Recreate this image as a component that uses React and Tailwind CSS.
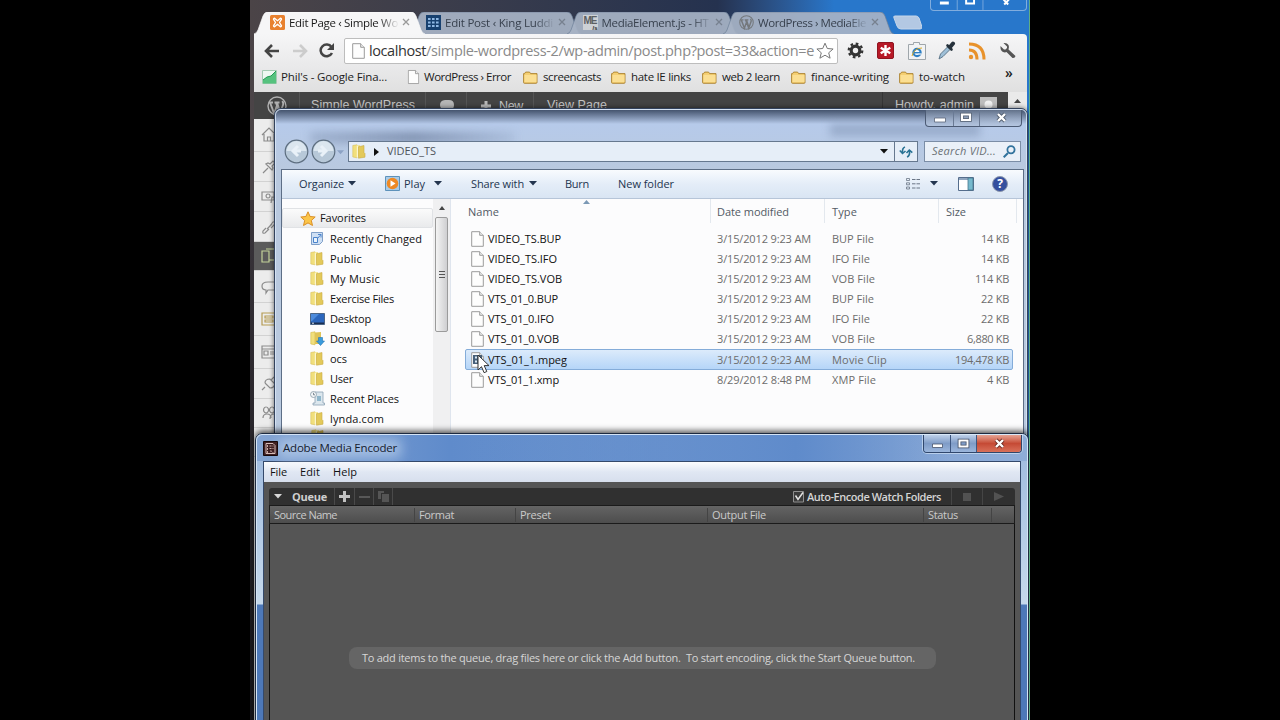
import { useLayoutEffect, useRef } from "react";

// Text set to a fixed width, the spacing between letters takes up the difference
function Txt({ w, className = "", children }) {
  const ref = useRef(null);

  useLayoutEffect(() => {
    const el = ref.current;
    el.style.letterSpacing = "0px";
    const natural = el.getBoundingClientRect().width;
    el.style.letterSpacing = `${(w - natural) / el.textContent.length}px`;
  }, [w, children]);

  return (
    <span ref={ref} className={`inline-block shrink-0 whitespace-pre ${className}`}>
      {children}
    </span>
  );
}

const Caret = ({ className = "" }) => (
  <svg className={`shrink-0 ${className}`} width="8" height="5" viewBox="0 0 8 5">
    <path d="M0 0h8L4 4.6z" fill="currentColor" />
  </svg>
);

const PageIcon = ({ className = "" }) => (
  <svg className={`shrink-0 ${className}`} width="13" height="16" viewBox="0 0 13 16">
    <path d="M.7.7h8l3.600 3.600v11H.7z" fill="#fdfdfd" stroke="#9b9b9b" />
    <path d="M8.700.7v3.600h3.600" fill="#eee" stroke="#9b9b9b" />
  </svg>
);

const BookmarkFolder = () => (
  <svg width="15" height="13" viewBox="0 0 15 13">
    <path d="M.6 11.500V2.600h1l1-1.500h4l1 1.500h6.400v8.900q0 .8-.8.8H1.400q-.8 0-.8-.8z" fill="#f5cf72" stroke="#a97f2c" strokeWidth=".9" />
    <path d="M1.500 4h12v7h-12z" fill="#fbdf93" />
  </svg>
);

const Folder = () => (
  <svg width="14" height="15" viewBox="0 0 14 15">
    <path d="M.8 1.500 5 .8v13L.8 13z" fill="#f1df7c" stroke="#d9c05a" strokeWidth=".6" />
    <path d="M4 1.500 8 1v11l-4 1.500z" fill="#f3e48c" />
    <path d="M6.500 2.800 12 1.500v7l1 1v3.700l-6.500 1z" fill="#e3c95a" stroke="#c9ad48" strokeWidth=".6" />
    <path d="M5.500 2v11" stroke="#fbf6cf" />
  </svg>
);

const RecentlyChanged = () => (
  <svg width="14" height="15" viewBox="0 0 14 15">
    <path d="M1.500 1.500h11v9l-3 3h-8z" fill="#cfe0f4" stroke="#7f9fc8" />
    <path d="M3.500 6.500h4v5h-4zM7 8l4-4.500M8 3.500h3v3" fill="#eaf3fc" stroke="#4a83cb" />
  </svg>
);

const DesktopIcon = () => (
  <svg width="15" height="12" viewBox="0 0 15 12">
    <path d="M.5.5h14v11H.5z" fill="#2b66bd" stroke="#4d6686" />
    <path d="M1 1h8L2 8H1z" fill="#4d8bdc" />
    <path d="M1 9.500h13V11H1z" fill="#1a2e50" />
    <path d="M2 10.200h2" stroke="#dbe7f5" />
  </svg>
);

const DownloadsIcon = () => (
  <svg width="15" height="15" viewBox="0 0 15 15">
    <path d="M.8 1.500 5 .8v13L.8 13z" fill="#f1df7c" stroke="#d3b848" strokeWidth=".6" />
    <path d="M5 1.500 11 1v12H5z" fill="#dfc458" />
    <path d="M8.500 6.500h4v3.500h2l-4 4.500-4-4.500h2z" fill="#3b9bdc" stroke="#2273b3" strokeWidth=".6" />
  </svg>
);

const RecentPlaces = () => (
  <svg width="15" height="15" viewBox="0 0 15 15">
    <path d="M5 1h8v11h1.500v2H3v-2h2z" fill="#dce7ee" stroke="#8ba1b2" strokeWidth=".8" />
    <path d="M7 5h4v5H7z" fill="#8fb6cb" />
    <circle cx="3.500" cy="3.500" r="3" fill="#f2f5f7" stroke="#899aa7" strokeWidth=".8" />
    <path d="M3.500 1.800v2h1.500" fill="none" stroke="#65717c" strokeWidth=".8" />
  </svg>
);

const WpLogo = ({ size, color }) => (
  <svg className="shrink-0" width={size} height={size} viewBox="0 0 20 20" fill="none" stroke={color}>
    <circle cx="10" cy="10" r="9" strokeWidth="1.400" />
    <path d="M3 6.500 7.200 17.500 10 9.500 8.800 6.500M10 9.500l3 8L16 9q.8-2-.8-3.800M2 6.500h4M7.500 6.500h5M10 6.500l3.200 10" strokeWidth="1.900" />
  </svg>
);

const TAB_ICONS = {
  xampp: (
    <svg width="15" height="15" viewBox="0 0 15 15">
      <rect width="15" height="15" rx="1.500" fill="#e8812f" />
      <path d="M3.500 4.200q0-1 1-1l3 2.500 3-2.500q1 0 1 1L9.500 7.500l2 3.300q0 1-1 1l-3-2.500-3 2.500q-1 0-1-1l2-3.300z" fill="none" stroke="#fff" strokeWidth="1.300" />
    </svg>
  ),
  grid: (
    <svg width="15" height="15" viewBox="0 0 15 15">
      <rect width="15" height="15" fill="#17406f" />
      <path d="M2 4h11M2 7.500h11M2 11h11" stroke="#8fb8e4" strokeWidth="2.200" strokeDasharray="2.600 1.400" />
    </svg>
  ),
  media: (
    <span className="flex h-[15px] w-[15px] flex-col items-end bg-[#cdd1d5] font-['Liberation_Sans',sans-serif] font-bold">
      <span className="h-[10px] w-[15px] text-center text-[10px] leading-[11px] tracking-[-1px] text-[#5c6064]">ME</span>
      <span className="h-[6px] text-[6px] leading-[6px] text-[#1f1f1f]">/s</span>
    </span>
  ),
  wp: <WpLogo size={15} color="#74787c" />,
};

const tabs = [
  { icon: "xampp", title: "Edit Page ‹ Simple Wo", w: 109, active: true },
  { icon: "grid", title: "Edit Post ‹ King Luddi", w: 108 },
  { icon: "media", title: "MediaElement.js - HT", w: 107 },
  { icon: "wp", title: "WordPress › MediaEle", w: 108 },
];

function Tab({ icon, title, w, active }) {
  return (
    <div className={active ? "relative z-10 -mr-[15px] h-[22px] w-[171px] shrink-0" : "relative -mr-[14.500px] h-[22px] w-[171px] shrink-0"}>
      <svg className="absolute inset-0" width="171" height="22" viewBox="0 0 171 22">
        <path
          d="M0 22Q3 21 4 18L9 4Q10.500 0 14 0H157Q160.500 0 162 4L167 18Q168 21 171 22"
          fill={active ? "#f6f6f7" : "#a7b3c5"}
          fillOpacity={active ? 1 : 0.93}
          stroke={active ? "#fafafa" : "#6d7f98"}
          strokeWidth=".7"
        />
      </svg>
      <div className="relative -mt-[1px] flex h-full items-center pl-[16px]">
        <span className="mr-[4px] flex w-[15px]">{TAB_ICONS[icon]}</span>
        <span className="-mt-[2px] w-[110px] overflow-hidden [mask-image:linear-gradient(to_right,black_82%,transparent)]">
          <Txt w={w} className={active ? "text-[11.5px] leading-[21px] text-[#1a1a1a]" : "text-[11.5px] leading-[21px] text-[#38414e]"}>{title}</Txt>
        </span>
        <svg className="ml-[3px]" width="8" height="8" viewBox="0 0 8 8">
          <path d="m1 1 6 6M7 1 1 7" stroke={active ? "#9a9a9a" : "#77818f"} strokeWidth="1.300" />
        </svg>
      </div>
    </div>
  );
}

const bookmarks = [
  { label: "screencasts", w: 58, cell: "w-[88px]" },
  { label: "hate IE links", w: 60, cell: "w-[91px]" },
  { label: "web 2 learn", w: 58, cell: "w-[89px]" },
  { label: "finance-writing", w: 78, cell: "w-[108px]" },
  { label: "to-watch", w: 46, cell: "w-[106px]" },
];

// Admin menu glyphs cut off by the window in front
const adminMenu = [
  { cls: "h-[33px] bg-[#ececec]", d: "M1 8 8 1l7 7M3 7v7h10V7M6.500 14v-4h3v4" },
  { cls: "h-[30px] bg-[#ececec]", d: "m2 14 5-5M5 5l6 6 1-2-1-2 3-3-2-2-3 3-2-1z" },
  { cls: "h-[30px] bg-[#ececec]", d: "M1 3h12v8H1zM7 5a2 2 0 1 0 .1 0M10 14l1-6 4 1" },
  { cls: "h-[30px] bg-[#ececec]", d: "m5 9-3 3q-1 3 2 2l4-4M8 8l4-5q3-1 2 2l-4 4M6 10l5-5" },
  { cls: "h-[29px] bg-[#5b5b5b] text-[#c4d39a]", d: "M1 3h7v11H1zM5 1h9v11H8" },
  { cls: "h-[32px] bg-[#ececec]", d: "M7 3h8v8H7l-2 3V11Q1 11 1 7t6-4" },
  { cls: "h-[33px] bg-[#ececec] text-[#b59b53]", d: "M1 2h13v12H1zM4 5h8v2H4zM4 9h8v2H4z" },
  { cls: "h-[33px] bg-[#ececec]", d: "M1 2h14v12H1zM1 5h14M3 7h4v4H3zM9 8h5M9 10h5" },
  { cls: "h-[30px] bg-[#ececec]", d: "m1 14 3-3M4 7l5 5q4 0 5-4L9 3Q4 3 4 7M10 4l3-3M13 7l3-3" },
  { cls: "h-[29px] bg-[#ececec]", d: "M5 2a2.500 3 0 1 0 .1 0M11 2a2.500 3 0 1 0 .1 0M2 13q0-4 4-4t4 4M9 14q0-5 4-5" },
  { cls: "h-[29px] bg-[#ececec]", d: "M1 3h12v9H1z" },
];

function Browser() {
  return (
    <div className="absolute top-0 left-[4px] flex h-[720px] w-[773px] flex-col">
      {/* Window buttons */}
      <div className="absolute top-0 right-0 flex h-[11px] w-[97px] rounded-b border border-t-0 border-[#bcd3ec]/60 text-white">
        <svg width="96" height="10" viewBox="0 0 96 10" fill="none">
          <path d="M26.500 0v10M52.500 0v10" stroke="#a9c8e9" strokeOpacity=".6" />
          <path d="M9 3h9" stroke="#fff" strokeWidth="3" />
          <path d="M35.500-2h8v5.500h-8z" stroke="#fff" strokeWidth="2" />
          <path d="m72-2 6 6.500M80-2l-6 6.500" stroke="#fff" strokeWidth="2" />
        </svg>
      </div>

      <div className="flex h-[34px] items-end">
        {tabs.map((t) => (
          <Tab key={t.title} {...t} />
        ))}
        <svg className="mb-[3px] ml-[12px]" width="30" height="16" viewBox="0 0 30 16">
          <path d="M3 1h21q2 0 3 2l3 9q0 2-2 2H9q-3 0-4-3L2 3q-1-2 1-2z" fill="#b3c8e3" stroke="#c5d6ea" />
        </svg>
      </div>

      {/* Address bar */}
      <div className="flex h-[33px] items-center rounded-tr bg-linear-to-b from-[#f6f6f7] to-[#e9e9ea] pl-[10px]">
        <svg width="16" height="14" viewBox="0 0 16 14" fill="none" stroke="#444" strokeWidth="2.600">
          <path d="M8 1 2 7l6 6M2 7h13" />
        </svg>
        <svg className="ml-[12px]" width="16" height="14" viewBox="0 0 16 14" fill="none" stroke="#ccc" strokeWidth="2.600">
          <path d="m8 1 6 6-6 6M14 7H1" />
        </svg>
        <svg className="ml-[11px]" width="16" height="15" viewBox="0 0 16 15" fill="none">
          <path d="M12.500 4A6 5.800 0 1 0 13 10" stroke="#444" strokeWidth="2.500" />
          <path d="M15 0v7H8z" fill="#444" />
        </svg>
        <div className="ml-[9px] flex h-[26px] w-[494px] items-center rounded-[2px] border border-[#bdbdbd] bg-white pl-[7px]">
          <PageIcon />
          <div className="ml-[4px] flex w-[446px] overflow-hidden text-[14.5px] leading-[22px]">
            <Txt w={57} className="text-[#333]">localhost</Txt>
            <Txt w={388} className="text-[#8a8a8a]">/simple-wordpress-2/wp-admin/post.php?post=33&action=e</Txt>
          </div>
          <svg className="ml-[1px]" width="18" height="17" viewBox="0 0 18 17">
            <path d="m9 1.200 2.300 5.300 5.800.5-4.400 3.800 1.400 5.400L9 13.200l-5.100 3 1.400-5.400L.9 7l5.800-.5z" fill="#fff" stroke="#777" />
          </svg>
        </div>
        <svg className="ml-[9px]" width="17" height="17" viewBox="0 0 17 17" fill="none" stroke="#333">
          <circle cx="8.500" cy="8.500" r="4.300" strokeWidth="3.200" />
          <circle cx="8.500" cy="8.500" r="6.800" strokeWidth="2.200" strokeDasharray="2.670 2.670" />
        </svg>
        <svg className="ml-[13px]" width="17" height="17" viewBox="0 0 17 17">
          <rect x=".5" y=".5" width="16" height="16" rx="1.500" fill="#b71927" stroke="#8f1520" />
          <path d="M8.500 3v11M3.700 5.700l9.600 5.600M3.700 11.300l9.600-5.600" stroke="#fff" strokeWidth="2.400" />
        </svg>
        <svg className="ml-[14px]" width="18" height="18" viewBox="0 0 18 18">
          <path d="M.5 2.500h5v-2h6v2h6v15H.5z" fill="#f2f3f4" stroke="#9fa6ab" />
          <circle cx="9" cy="10.500" r="3.600" fill="#fff" stroke="#2f7fc4" strokeWidth="2.200" />
          <path d="M5.500 10.700h7" stroke="#2f7fc4" strokeWidth="1.500" />
          <path d="M10.500 12h3" stroke="#f2f3f4" strokeWidth="1.200" />
          <path d="M4 14Q6 6 14 6" fill="none" stroke="#d6a928" />
        </svg>
        <svg className="ml-[12px]" width="18" height="19" viewBox="0 0 18 19">
          <path d="m1 18 1.500-5L9.500 6l2.500 2.500L5 15.500z" fill="#9fc0d8" stroke="#60798c" />
          <path d="m9.500 4.500 4 4" stroke="#26323c" strokeWidth="2.600" strokeLinecap="round" />
          <path d="m12.500 5.500 2.500-3" stroke="#26323c" strokeWidth="4" strokeLinecap="round" />
        </svg>
        <svg className="ml-[12px]" width="18" height="18" viewBox="0 0 18 18" fill="none" stroke="#e8922b" strokeWidth="3">
          <circle cx="3" cy="15" r="2.200" fill="#e8922b" stroke="none" />
          <path d="M1 8q8 0 8 9.500M1 2q15 0 15 15.500" />
        </svg>
        <svg className="ml-[14px]" width="16" height="17" viewBox="0 0 16 17">
          <path d="M3.500 1 7 4.500V6L5.500 7.500H4L.5 4Q0 8.500 3 10q2 .8 3.500 0l6 6q2.500.5 3-2l-7-6.500Q9.500 5 8.500 3 7 .5 3.500 1z" fill="#555" />
        </svg>
      </div>

      {/* Bookmarks */}
      <div className="flex h-[25px] items-start bg-linear-to-b from-[#e9e9ea] to-[#e0e0e0] pl-[8px] text-[11.5px] leading-[20px] text-[#1c1c1c]">
        <div className="flex h-[20px] items-center">
          <svg width="15" height="14" viewBox="0 0 15 14">
            <path d="M.5.5h14v13H.5z" fill="#eef8f1" stroke="#a5cbb3" />
            <path d="m1 10 4-3 4-1 5-5v12.500H1z" fill="#56c27e" />
            <path d="m1 10 4-3 4-1 5-5" fill="none" stroke="#209a52" />
          </svg>
          <span className="ml-[4px] w-[126px]"><Txt w={106}>Phil's - Google Fina...</Txt></span>
          <PageIcon className="mr-[4px] scale-90" />
          <span className="w-[99px]"><Txt w={87}>WordPress › Error</Txt></span>
          {bookmarks.map((b) => (
            <span key={b.label} className={`flex shrink-0 items-center gap-[5px] ${b.cell}`}>
              <BookmarkFolder />
              <Txt w={b.w}>{b.label}</Txt>
            </span>
          ))}
          <span className="mb-[9px] text-[14px] font-semibold">»</span>
        </div>
      </div>

      {/* Admin bar */}
      <div className="flex h-[27px] shrink-0 bg-[#444] font-['Liberation_Sans',sans-serif] text-[12.5px] leading-[26px] text-[#c4c4c4]">
        <span className="flex w-[46px] items-center border-r border-[#555] pl-[13px]"><WpLogo size={20} color="#b1b1b1" /></span>
        <span className="w-[126px] border-r border-[#555] pl-[11px]"><Txt w={104}>Simple WordPress</Txt></span>
        <span className="flex w-[41px] justify-center border-r border-[#555] pt-[8px] pl-[2px]">
          <svg width="14" height="12" viewBox="0 0 14 12"><path d="M5 0h4q5 0 5 5t-5 4.500L7 12 5.500 9.500Q0 9.500 0 5t5-5z" fill="#b5b5b5" /></svg>
        </span>
        <span className="flex w-[67px] items-center border-r border-[#555] pl-[14px]">
          <svg className="mr-[8px]" width="10" height="10" viewBox="0 0 10 10"><path d="M5 0v10M0 5h10" stroke="#b9b9b9" strokeWidth="3" /></svg>
          <Txt w={24}>New</Txt>
        </span>
        <span className="w-[348px] pl-[13px]"><Txt w={60}>View Page</Txt></span>
        <span className="flex w-[126px] border-l border-[#353535] pl-[12px]">
          <Txt w={79}>Howdy, admin</Txt>
          <svg className="mt-[5px] ml-[6px]" width="17" height="17" viewBox="0 0 17 17">
            <path d="M0 0h17v17H0z" fill="#bdbdbd" />
            <circle cx="8.500" cy="7.500" r="4" fill="#f0f0f0" />
            <path d="M2 17q0-5 6.500-5t6.500 5z" fill="#f0f0f0" />
          </svg>
        </span>
        <span className="flex flex-1 justify-center bg-[#eaeaea] pt-[7px] text-[#444]">
          <svg width="7" height="4" viewBox="0 0 7 4"><path d="M0 4h7L3.500 0z" fill="#444" /></svg>
        </span>
      </div>

      {/* Admin menu */}
      <div className="flex flex-1 flex-col bg-[#ececec]">
        {adminMenu.map((m, i) => (
          <div key={i} className={`flex shrink-0 items-center border-b border-[#d2d2d2] pl-[7px] text-[#8b8b8b] ${m.cls}`}>
            <svg width="16" height="16" viewBox="0 0 16 16" fill="none" stroke="currentColor" strokeWidth="1.200">
              <path d={m.d} />
            </svg>
          </div>
        ))}
      </div>
    </div>
  );
}

const favorites = [
  { label: "Recently Changed", w: 92, icon: <RecentlyChanged /> },
  { label: "Public", w: 32, icon: <Folder /> },
  { label: "My Music", w: 50, icon: <Folder /> },
  { label: "Exercise Files", w: 64, icon: <Folder /> },
  { label: "Desktop", w: 41, icon: <DesktopIcon /> },
  { label: "Downloads", w: 56, icon: <DownloadsIcon /> },
  { label: "ocs", w: 17, icon: <Folder /> },
  { label: "User", w: 23, icon: <Folder /> },
  { label: "Recent Places", w: 69, icon: <RecentPlaces /> },
  { label: "lynda.com", w: 54, icon: <Folder /> },
];

const files = [
  { name: "VIDEO_TS.BUP", nw: 73, type: "BUP File", tw: 42, size: "14 KB", sw: 28 },
  { name: "VIDEO_TS.IFO", nw: 69, type: "IFO File", tw: 38, size: "14 KB", sw: 28 },
  { name: "VIDEO_TS.VOB", nw: 74, type: "VOB File", tw: 43, size: "114 KB", sw: 34 },
  { name: "VTS_01_0.BUP", nw: 70, type: "BUP File", tw: 42, size: "22 KB", sw: 28 },
  { name: "VTS_01_0.IFO", nw: 66, type: "IFO File", tw: 38, size: "22 KB", sw: 28 },
  { name: "VTS_01_0.VOB", nw: 71, type: "VOB File", tw: 43, size: "6,880 KB", sw: 42 },
  { name: "VTS_01_1.mpeg", nw: 79, type: "Movie Clip", tw: 55, size: "194,478 KB", sw: 54, selected: true },
  { name: "VTS_01_1.xmp", nw: 71, date: "8/29/2012 8:48 PM", type: "XMP File", tw: 44, size: "4 KB", sw: 22 },
];

function FileRow({ file }) {
  const box = file.selected
    ? "h-[21px] border-[#84acd9] bg-linear-to-b from-[#dcebfb] to-[#b5d5f8]"
    : "h-[20px] border-transparent";

  return (
    <div className={`flex w-[548px] items-center rounded-[2px] border pl-[5px] leading-[18px] text-[#6c6c6c] ${box}`}>
      <span className="relative flex w-[17px]">
        <PageIcon />
        {file.selected && (
          <svg className="absolute top-[3px] left-[2px]" width="10" height="10" viewBox="0 0 10 10">
            <path d="M0 0h9v9H0z" fill="#47607a" />
            <path d="M2 2.500h6M2 6.500h6" stroke="#dce9f5" strokeWidth="2" strokeDasharray="2 1" />
          </svg>
        )}
      </span>
      <span className="w-[229px] text-[#111]"><Txt w={file.nw}>{file.name}</Txt></span>
      <span className="w-[115px]"><Txt w={94}>{file.date || "3/15/2012 9:23 AM"}</Txt></span>
      <span className="w-[113px]"><Txt w={file.tw}>{file.type}</Txt></span>
      <span className="flex w-[64px] justify-end"><Txt w={file.sw}>{file.size}</Txt></span>
    </div>
  );
}

function Explorer() {
  return (
    <div className="absolute top-[108px] left-[24px] h-[612px] w-[754px] overflow-hidden rounded-t-[7px] border border-[#33425c] bg-[#aebfd6] text-[11px] shadow-[0_0_5px_rgba(0,0,0,0.6)]">
      <div className="h-full rounded-t-[6px] border border-[#dce9f8]/80 bg-linear-to-b from-[#45546e] via-[#b6caea] via-[14px] to-[#b9c9df] to-[60px]">
        {/* Title area with what shines through the glass */}
        <div className="relative h-[29px]">
          <div className="absolute top-[22px] left-[34px] h-[11px] w-[205px] bg-linear-to-r from-[#6b7d9c]/30 via-[#5b6c8c]/60 to-[#7d92b4]/20 blur-[4px]" />
          <div className="absolute top-[14px] left-[554px] h-[12px] w-[150px] bg-[#8398b8]/60 blur-[4px]" />
          <div className="absolute top-0 right-[4px] h-[17px] w-[97px] rounded-b-[4px] border border-t-0 border-[#4c5b74] bg-linear-to-b from-[#75849b]/60 to-[#b3c4dd]/80">
            <svg width="96" height="16" viewBox="0 0 96 16" fill="none">
              <path d="M27.500 0v16M53.500 0v16" stroke="#6a7a94" />
              <path d="M8.500 8h11v4h-11z" fill="#fff" stroke="#5a6678" strokeWidth=".8" />
              <path d="M36 4.500h8v5.500h-8z" stroke="#4f5b6c" strokeWidth="3.600" />
              <path d="M36 4.500h8v5.500h-8z" stroke="#fff" strokeWidth="2.200" />
              <path d="m72 4 7 7M79 4l-7 7" stroke="#4f5b6c" strokeWidth="4" />
              <path d="m72 4 7 7M79 4l-7 7" stroke="#fff" strokeWidth="2.400" />
            </svg>
          </div>
        </div>

        {/* Address row */}
        <div className="relative flex h-[30px] pl-[8px]">
          {["M14 7 9 12l5 5M9 12h8", "m10 7 5 5-5 5M15 12H7"].map((d) => (
            <svg key={d} className="mr-[2px]" width="25" height="25" viewBox="0 0 25 25" fill="none">
              <circle cx="12.500" cy="12.500" r="11.300" fill="#b7c8d8" stroke="#5e6f80" strokeWidth="1.200" />
              <path d="M2.500 12a10 10 0 0 1 20 0z" fill="#dbe6ef" />
              <path d={d} stroke="#e9f1f8" strokeWidth="3" />
            </svg>
          ))}
          <Caret className="mt-[11px] -ml-[1px] w-[7px] text-[#8ca2c4]" />
          <div className="mt-[2px] ml-[4px] flex h-[21px] w-[570px] items-center border border-[#66788f] bg-[#e6eef8] pl-[3px]">
            <Folder />
            <svg className="ml-[8px]" width="5" height="8" viewBox="0 0 5 8"><path d="M0 0v8l5-4z" fill="#111" /></svg>
            <span className="ml-[8px] w-[493px] text-[#4e545b]"><Txt w={49}>VIDEO_TS</Txt></span>
            <Caret className="text-[#111]" />
            <span className="ml-[6px] flex h-full flex-1 items-center justify-center border-l border-[#66788f]">
              <svg width="14" height="12" viewBox="0 0 14 12" fill="none" stroke="#2a7395" strokeWidth="1.600">
                <path d="M6 1Q3 2 3.500 7M.8 4.500l2.700 3 3-2.500M8 11q3-1 2.500-6M7.500 7l2.800-3 3 2.700" />
              </svg>
            </span>
          </div>
          <div className="mt-[2px] ml-[6px] flex h-[21px] w-[97px] items-center border border-[#7b8da6] bg-[#eaf0f8] pl-[7px] text-[#6b7076] italic">
            <Txt w={64}>Search VID...</Txt>
            <svg className="ml-[7px]" width="13" height="13" viewBox="0 0 13 13" fill="none">
              <circle cx="8" cy="4.800" r="3.600" stroke="#32739d" strokeWidth="1.800" />
              <path d="m5 8-4.300 4.300" stroke="#32739d" strokeWidth="2" />
            </svg>
          </div>
        </div>

        <div className="ml-[5px] flex h-[552px] w-[743px] flex-col border-x border-t border-[#5d6e86] bg-[#fcfcfd]">
          {/* Command bar */}
          <div className="flex h-[29px] shrink-0 items-center border-b border-[#b6c5d8] bg-linear-to-b from-[#f8fbfe] via-[#e4edf8] via-50% to-[#d9e5f3] pb-[1px] pl-[17px] leading-[20px] text-[#24354f]">
            <Txt w={45}>Organize</Txt>
            <Caret className="ml-[4px]" />
            <svg className="mr-[4px] ml-[29px]" width="15" height="15" viewBox="0 0 15 15">
              <path d="M.5.5h14v14H.5z" fill="#a9cbe6" stroke="#5d92bb" />
              <circle cx="7.500" cy="7.500" r="5.800" fill="#ee8924" />
              <path d="M5.500 4.200v6.600l5-3.300z" fill="#fff" />
            </svg>
            <Txt w={21}>Play</Txt>
            <Caret className="ml-[9px]" />
            <span className="ml-[29px] flex"><Txt w={53}>Share with</Txt></span>
            <Caret className="ml-[5px]" />
            <span className="ml-[28px] flex w-[53px]"><Txt w={24}>Burn</Txt></span>
            <span className="flex w-[288px]"><Txt w={56}>New folder</Txt></span>
            <svg width="14" height="12" viewBox="0 0 14 12" fill="none" stroke="#6b7686">
              <path d="M.5.5h3v2h-3zM.5 4.800h3v2h-3zM.5 9h3v2h-3z" strokeWidth=".8" />
              <path d="M6 1.500h8M6 5.800h8M6 10h8" strokeDasharray="3.500 1" />
            </svg>
            <Caret className="ml-[10px]" />
            <svg className="ml-[20px]" width="16" height="14" viewBox="0 0 16 14">
              <path d="M.5.5h15v13H.5z" fill="#fff" stroke="#556d8c" />
              <path d="M1 1h14v2H1z" fill="#8fa5bf" />
              <path d="M10 1h5v12h-5z" fill="#76b9cd" stroke="#47778d" strokeWidth=".8" />
            </svg>
            <span className="ml-[18px] flex h-[16px] w-[16px] items-center justify-center rounded-full border border-[#8b97ad] bg-[#344f9e] text-[12px] leading-[14px] font-bold text-white">?</span>
          </div>

          <div className="flex flex-1">
            {/* Favorites pane */}
            <div className="w-[151px] pt-[9px]">
              <div className="mb-[0.500px] flex h-[20px] items-center rounded-[2px] border border-[#e0e2e5] bg-linear-to-b from-[#fbfbfb] to-[#e9eaec] pl-[17px] text-[#151515]">
                <svg className="mr-[4px]" width="16" height="15" viewBox="0 0 16 15">
                  <path d="m8 .8 2.100 4.700 5.100.5-3.900 3.500 1.200 5L8 11.900l-4.500 2.600 1.200-5L.8 6l5.100-.5z" fill="#fbc549" stroke="#da8f26" />
                </svg>
                <Txt w={46}>Favorites</Txt>
              </div>
              {favorites.map((f) => (
                <div key={f.label} className="flex h-[20.050px] items-center pl-[28px] leading-[18px] text-[#111]">
                  <span className="flex w-[20px]">{f.icon}</span>
                  <Txt w={f.w}>{f.label}</Txt>
                </div>
              ))}
              <div className="pl-[29px]"><Folder /></div>
            </div>
            <div className="flex w-[18px] flex-col items-center border-r border-[#dfe5ee] bg-[#f0f0f1] pt-[7px]">
              <svg width="6" height="4" viewBox="0 0 6 4"><path d="M0 4h6L3 0z" fill="#444" /></svg>
              <div className="mt-[7px] flex h-[115px] w-[13px] flex-col items-center justify-center gap-[2px] rounded-[2px] border border-[#9b9b9b] bg-linear-to-r from-[#f4f4f4] to-[#cfcfd1]">
                <i className="h-px w-[6px] bg-[#555]" />
                <i className="h-px w-[6px] bg-[#555]" />
                <i className="h-px w-[6px] bg-[#555]" />
              </div>
            </div>

            {/* File list */}
            <div className="relative w-[572px] pl-[14px]">
              <svg className="absolute top-[1px] left-[132px]" width="7" height="4" viewBox="0 0 7 4"><path d="M0 4h7L3.500 0z" fill="#7b99b5" /></svg>
              <div className="mb-[14px] flex h-[16px] leading-[25px] text-[#525a64]">
                <span className="h-[24px] w-[246px] border-r border-[#e3e8ee] pl-[3px]"><Txt w={31}>Name</Txt></span>
                <span className="h-[24px] w-[114px] border-r border-[#e3e8ee] pl-[6px]"><Txt w={72}>Date modified</Txt></span>
                <span className="h-[24px] w-[114px] border-r border-[#e3e8ee] pl-[7px]"><Txt w={25}>Type</Txt></span>
                <span className="h-[24px] w-[78px] border-r border-[#e3e8ee] pl-[7px]"><Txt w={20}>Size</Txt></span>
              </div>
              {files.map((f) => (
                <FileRow key={f.name} file={f} />
              ))}
            </div>
          </div>
        </div>
      </div>
    </div>
  );
}

const queueColumns = [
  { label: "Source Name", w: 63, cell: "w-[145px]" },
  { label: "Format", w: 35, cell: "w-[101px]" },
  { label: "Preset", w: 31, cell: "w-[192px]" },
  { label: "Output File", w: 54, cell: "w-[216px]" },
  { label: "Status", w: 30, cell: "w-[68px]" },
];

function Encoder() {
  return (
    <div className="absolute top-[433px] left-[5px] h-[300px] w-[774px] overflow-hidden rounded-t-[7px] border border-[#1d2a40] bg-linear-to-b from-[#9db9de] via-[#c6d9ec] via-[170px] to-[#4d78b8] to-[171px] text-[11px] shadow-[0_-2px_6px_rgba(0,0,0,0.7)]">
      <div className="flex h-full flex-col rounded-t-[6px] border border-[#d5e4f6]">
        <div className="relative flex h-[26px] shrink-0 items-center rounded-t-[6px] bg-linear-to-r from-[#85a5d3] via-[#5f8bcb] via-25% to-[#8fadd8] pl-[6px]">
          <div className="absolute inset-0 rounded-t-[6px] bg-linear-to-r from-[#5f8bcb]/0 from-25% via-[#5f8bcb] via-70% to-[#5f8bcb]/0 to-90%" />
          <div className="absolute top-[4px] left-[22px] h-[19px] w-[122px] bg-[#c6d9f0]/60 blur-[6px]" />
          <svg className="relative mr-[5px]" width="15" height="15" viewBox="0 0 15 15">
            <path d="M.5.5h14v14H.5z" fill="#3f1f22" stroke="#17090b" />
            <path d="M3 2.500h7l2 2v8H3z" fill="none" stroke="#d7bdb8" />
            <path d="M4.500 4v8M6.500 5h4M6.500 7.500h4M7 10q3 0 3 2" fill="none" stroke="#c9a9a4" strokeDasharray="2 1" />
          </svg>
          <Txt w={114} className="relative text-[11.5px] leading-[22px] text-[#15202f]">Adobe Media Encoder</Txt>
          <div className="absolute top-0 right-[5px] flex h-[18px] w-[99px] overflow-hidden rounded-b-[4px] border border-t-0 border-[#30476c] shadow-[0_0_0_1px_rgba(220,235,250,0.6)]">
            <span className="w-[27px] border-r border-[#3d5680] bg-linear-to-b from-[#bdcfe8] via-[#7f9cc7] via-50% to-[#9bb6dc]">
              <svg width="27" height="17" viewBox="0 0 27 17"><path d="M8.500 9h10v3.500h-10z" fill="#fff" stroke="#47536a" strokeWidth=".8" /></svg>
            </span>
            <span className="w-[26px] border-r border-[#3d5680] bg-linear-to-b from-[#bdcfe8] via-[#7f9cc7] via-50% to-[#9bb6dc]">
              <svg width="25" height="17" viewBox="0 0 25 17" fill="none">
                <path d="M8.500 5.500h8v6h-8z" stroke="#3e4a60" strokeWidth="3.600" />
                <path d="M8.500 5.500h8v6h-8z" stroke="#fff" strokeWidth="2" />
              </svg>
            </span>
            <span className="flex-1 bg-linear-to-b from-[#e5a393] via-[#c54a35] via-50% to-[#d8705a]">
              <svg width="45" height="17" viewBox="0 0 45 17" fill="none">
                <path d="m19 5 7 7M26 5l-7 7" stroke="#6c2a22" strokeWidth="4" />
                <path d="m19 5 7 7M26 5l-7 7" stroke="#fff" strokeWidth="2.400" />
              </svg>
            </span>
          </div>
        </div>

        <div className="mr-[6px] ml-[6px] flex flex-1 flex-col border-x border-t border-[#34496b] bg-[#555]">
          <div className="flex h-[20px] items-center bg-linear-to-b from-[#fcfdfe] via-[#e0e7f3] via-50% to-[#d7dfed] pl-[6px] leading-[20px] text-[#111]">
            <span className="flex w-[30px]"><Txt w={17}>File</Txt></span>
            <span className="flex w-[33px]"><Txt w={20}>Edit</Txt></span>
            <Txt w={24}>Help</Txt>
          </div>

          {/* Queue panel */}
          <div className="mt-[6px] mr-[5px] ml-[5px] flex flex-1 flex-col">
            <div className="flex h-[17px] items-center rounded-t-[3px] bg-[#303030] pl-[5px] leading-[17px] text-[#cfcfcf]">
              <Caret className="h-[7px] text-[#d8d8d8]" />
              <span className="ml-[10px] flex w-[42px] font-bold"><Txt w={35}>Queue</Txt></span>
              <span className="flex h-full w-[20px] items-center justify-center border-l border-[#4a4a4a]">
                <svg width="11" height="11" viewBox="0 0 11 11"><path d="M5.500 0v11M0 5.500h11" stroke="#c3c3c3" strokeWidth="3" /></svg>
              </span>
              <span className="flex h-full w-[19px] items-center justify-center border-l border-[#4a4a4a]">
                <i className="h-[2px] w-[11px] bg-[#585858]" />
              </span>
              <span className="flex h-full w-[20px] items-center justify-center border-x border-[#4a4a4a]">
                <svg width="11" height="11" viewBox="0 0 11 11" fill="#555"><path d="M0 0h6v2H3v6H0zM4 3h7v8H4z" /></svg>
              </span>
              <svg className="ml-[400px]" width="12" height="12" viewBox="0 0 12 12" fill="none">
                <path d="M.5.5h10v10.500H.5z" fill="#3b3b3b" stroke="#8f8f8f" />
                <path d="m2.500 4.500 2.500 4L10 1.500" stroke="#e2e2e2" strokeWidth="1.500" />
              </svg>
              <span className="ml-[2px] flex w-[144px] font-semibold text-[#d4d4d4]"><Txt w={134}>Auto-Encode Watch Folders</Txt></span>
              <span className="flex h-full w-[31px] items-center justify-center border-l border-[#454545]"><i className="h-[8px] w-[8px] bg-[#525252]" /></span>
              <span className="flex h-full flex-1 items-center border-l border-[#454545] pl-[11px]">
                <svg width="10" height="9" viewBox="0 0 10 9"><path d="M0 0v9l10-4.500z" fill="#525252" /></svg>
              </span>
            </div>
            <div className="flex h-[19px] items-center border-x border-y border-[#1b1b1b] bg-linear-to-b from-[#646464] to-[#4d4d4d] leading-[16px] text-[#cacaca]">
              {queueColumns.map((c) => (
                <span key={c.label} className={`flex h-[14px] shrink-0 items-center border-r border-[#444] pl-[4px] ${c.cell}`}>
                  <Txt w={c.w}>{c.label}</Txt>
                </span>
              ))}
            </div>
            <div className="flex-1 border-x border-[#111] bg-[#555] pt-[123px]">
              <div className="ml-[79px] flex h-[22px] w-[587px] items-center rounded-[8px] bg-[#656565] pl-[13px] text-[#d6d6d6]">
                <Txt w={553}>{"To add items to the queue, drag files here or click the Add button.  To start encoding, click the Start Queue button."}</Txt>
              </div>
            </div>
          </div>
        </div>
      </div>
    </div>
  );
}

export default function App() {
  return (
    <div className="h-[720px] w-[1280px] overflow-hidden bg-black font-['Open_Sans',sans-serif]">
      <div className="relative ml-[250px] h-full w-[780px] overflow-hidden border-r border-[#5fae86]">
        <div className="absolute inset-0 bg-linear-to-r from-[#4b4447] via-[#25324f] via-60% to-[#2877cb] to-75%" />
        <div className="absolute top-[200px] bottom-0 left-0 w-[6px] bg-linear-to-b from-[#39343a] to-[#17161b]" />
        <Browser />
        <Explorer />
        <Encoder />
        <svg className="absolute top-[354px] left-[227px]" width="14" height="20" viewBox="0 0 14 20">
          <path d="M1 1v15l3.500-3.300 2.600 6 2.700-1.200L7.200 11.600H12z" fill="#fff" stroke="#333" />
        </svg>
      </div>
    </div>
  );
}
